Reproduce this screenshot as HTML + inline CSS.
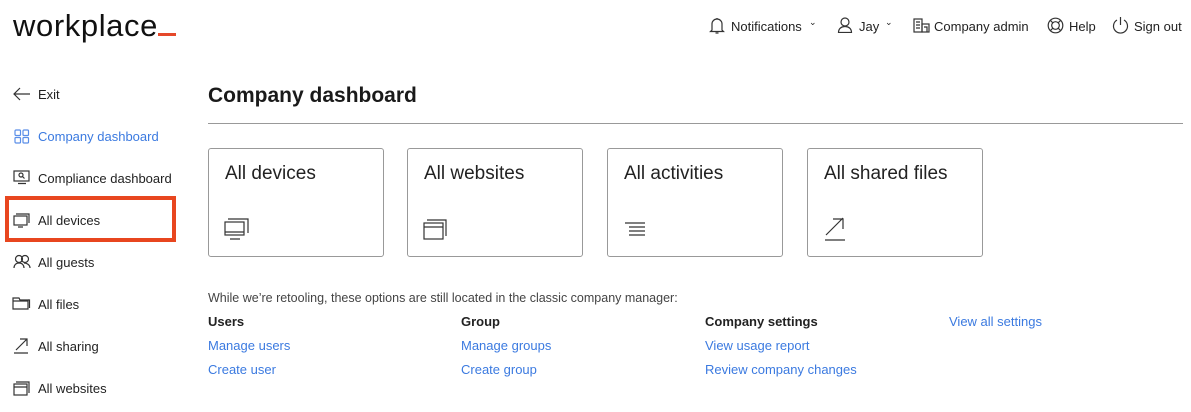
<!DOCTYPE html>
<html><head><style>
*{margin:0;padding:0;box-sizing:border-box}
body{width:1191px;height:412px;background:#fff;font-family:"Liberation Sans",sans-serif;color:#222;position:relative;overflow:hidden}
.a{position:absolute;white-space:nowrap}
.logo{left:13px;top:8px;font-size:31px;color:#111;letter-spacing:0.6px}
.logo span{display:inline-block;width:18px;height:3px;background:#e5482a;vertical-align:baseline;margin-left:0px}
.nav{font-size:13px;color:#222}
.side{font-size:13px;color:#222;left:38px}
svg{position:absolute;fill:none;stroke:#333;stroke-width:1.2}
.card{position:absolute;top:148px;width:176px;height:109px;border:1px solid #999;border-radius:3px}
.card div{position:absolute;left:16px;top:14px;font-size:19px;color:#222}
.card svg{left:15px;top:68px}
.lk{color:#3b7ae0;font-size:13px}
.h{font-size:13px;font-weight:bold;color:#222}
</style></head><body>
<div class="a logo">workplace<span></span></div>

<svg style="left:709px;top:17px" width="16" height="18" viewBox="0 0 16 18"><path d="M3 13V7a5 5 0 0 1 10 0v6l1.5 1.5h-13z M6.5 16h3"/><path d="M8 1v1"/></svg>
<div class="a nav" style="left:731px;top:19px">Notifications</div>
<div class="a nav" style="left:809px;top:17px;font-size:9px">&#8964;</div>
<svg style="left:837px;top:17px" width="16" height="16" viewBox="0 0 16 16"><circle cx="8" cy="5" r="4"/><path d="M1.5 15.5c0-4 3-6 6.5-6s6.5 2 6.5 6z"/></svg>
<div class="a nav" style="left:859px;top:19px">Jay</div>
<div class="a nav" style="left:885px;top:17px;font-size:9px">&#8964;</div>
<svg style="left:913px;top:18px" width="17" height="15" viewBox="0 0 17 15"><rect x="1" y="1" width="8" height="13"/><rect x="9" y="6" width="7" height="8"/><path d="M3 4h4M3 7h4M3 10h4M11 9h3v5"/></svg>
<div class="a nav" style="left:934px;top:19px">Company admin</div>
<svg style="left:1047px;top:17px" width="17" height="17" viewBox="0 0 17 17"><circle cx="8.5" cy="8.5" r="7.3"/><circle cx="8.5" cy="8.5" r="3.8"/><path d="M3.5 3.5l2.3 2.3M13.5 3.5l-2.3 2.3M3.5 13.5l2.3-2.3M13.5 13.5l-2.3-2.3"/></svg>
<div class="a nav" style="left:1069px;top:19px">Help</div>
<svg style="left:1112px;top:16px" width="17" height="18" viewBox="0 0 17 18"><path d="M5 4a7 7 0 1 0 7 0M8.5 1v8"/></svg>
<div class="a nav" style="left:1134px;top:19px">Sign out</div>

<svg style="left:13px;top:87px" width="18" height="14" viewBox="0 0 18 14"><path d="M17 7H1M7 1L1 7l6 6"/></svg>
<div class="a side" style="top:87px">Exit</div>
<svg style="left:14px;top:129px;stroke:#5a8ee8" width="16" height="15" viewBox="0 0 16 15"><rect x="1" y="1" width="5.5" height="5.5" rx="1"/><rect x="9" y="1" width="5.5" height="5.5" rx="1"/><rect x="1" y="8.5" width="5.5" height="5.5" rx="1"/><rect x="9" y="8.5" width="5.5" height="5.5" rx="1"/></svg>
<div class="a side" style="top:129px;color:#3b7ae0">Company dashboard</div>
<svg style="left:13px;top:170px" width="18" height="15" viewBox="0 0 18 15"><rect x="1" y="1" width="15" height="10"/><circle cx="8" cy="5" r="2"/><path d="M9.5 6.5l2 2M5 13.5h8"/></svg>
<div class="a side" style="top:171px">Compliance dashboard</div>
<div class="a" style="left:5px;top:196px;width:171px;height:46px;border:4px solid #e8461f"></div>
<svg style="left:13px;top:213px" width="18" height="15" viewBox="0 0 18 15"><rect x="1" y="3" width="13" height="9"/><path d="M3 1h13v9M5 14h5"/></svg>
<div class="a side" style="top:213px">All devices</div>
<svg style="left:13px;top:254px" width="18" height="15" viewBox="0 0 18 15"><circle cx="6" cy="5" r="3.5"/><circle cx="12" cy="5" r="3.5"/><path d="M1 14c0-3 2-5 5-5s5 2 5 5M11 9c3 0 6 2 6 5"/></svg>
<div class="a side" style="top:255px">All guests</div>
<svg style="left:12px;top:296px" width="19" height="15" viewBox="0 0 19 15"><path d="M1 2h6l1 2h8v9H1zM1 5h15"/><path d="M16 4h1.5v8"/></svg>
<div class="a side" style="top:297px">All files</div>
<svg style="left:13px;top:338px" width="18" height="16" viewBox="0 0 18 16"><path d="M3 12L14 1M7 1h7v7M1 15h14"/></svg>
<div class="a side" style="top:339px">All sharing</div>
<svg style="left:13px;top:380px" width="18" height="16" viewBox="0 0 18 16"><rect x="1" y="4" width="13" height="11"/><path d="M1 7h13M3 2h13v11"/></svg>
<div class="a side" style="top:381px">All websites</div>

<div class="a" style="left:208px;top:84px;font-size:21px;font-weight:bold;color:#1a1a1a">Company dashboard</div>
<div class="a" style="left:208px;top:123px;width:975px;height:1px;background:#999"></div>

<div class="card" style="left:208px"><div>All devices</div><svg width="26" height="24" viewBox="0 0 26 24"><rect x="1" y="5" width="19" height="13"/><path d="M4 2h20v14M1 15h19M6 22h10"/></svg></div>
<div class="card" style="left:407px"><div>All websites</div><svg width="26" height="24" viewBox="0 0 26 24"><rect x="1" y="6" width="19" height="16"/><path d="M1 10h19M4 3h19v16"/></svg></div>
<div class="card" style="left:607px"><div>All activities</div><svg width="26" height="24" viewBox="0 0 26 24"><path d="M2 6h20M6 10h16M6 14h16M6 18h16"/></svg></div>
<div class="card" style="left:807px"><div>All shared files</div><svg width="26" height="26" viewBox="0 0 26 26"><path d="M3 18L20 1M10 2h10v10M2 23h20"/></svg></div>

<div class="a" style="left:208px;top:291px;font-size:12.5px;color:#444">While we’re retooling, these options are still located in the classic company manager:</div>
<div class="a h" style="left:208px;top:314px">Users</div>
<div class="a h" style="left:461px;top:314px">Group</div>
<div class="a h" style="left:705px;top:314px">Company settings</div>
<div class="a lk" style="left:949px;top:314px">View all settings</div>
<div class="a lk" style="left:208px;top:338px">Manage users</div>
<div class="a lk" style="left:461px;top:338px">Manage groups</div>
<div class="a lk" style="left:705px;top:338px">View usage report</div>
<div class="a lk" style="left:208px;top:362px">Create user</div>
<div class="a lk" style="left:461px;top:362px">Create group</div>
<div class="a lk" style="left:705px;top:362px">Review company changes</div>
</body></html>
